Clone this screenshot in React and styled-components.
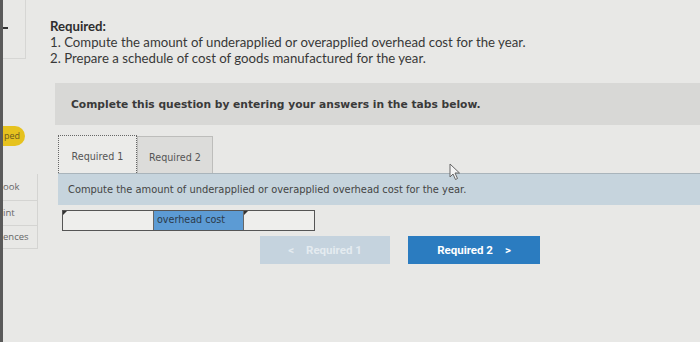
import React from 'react';
import styled, { createGlobalStyle } from 'styled-components';

const GlobalStyle = createGlobalStyle`
  html, body {
    margin: 0;
    padding: 0;
    background: #e8e8e6;
    width: 700px;
    height: 342px;
    overflow: hidden;
  }
`;

const Page = styled.div`
  display: flex;
  width: 700px;
  height: 342px;
  background: #e8e8e6;
`;

const Sidebar = styled.div`
  width: 42px;
  flex-shrink: 0;
  border-left: 3px solid #5a5a5a;
  display: flex;
  flex-direction: column;
  font-family: 'Open Sans', sans-serif;
  font-size: 9.5px;
  color: #666;
`;

const TopBox = styled.div`
  width: 22px;
  height: 58px;
  border-right: 1px solid #d6d6d4;
  border-bottom: 1px solid #d6d6d4;
  position: relative;
`;

const Dash = styled.div`
  position: absolute;
  left: 0;
  top: 27px;
  width: 5px;
  height: 2px;
  background: #333;
`;

const Pill = styled.div`
  margin-top: 67px;
  width: 22px;
  height: 20px;
  border-radius: 0 10px 10px 0;
  background: #e6c21e;
  color: #6a5a20;
  font-size: 9px;
  line-height: 20px;
  padding-left: 1px;
  box-sizing: border-box;
`;

const Chevron = styled.div`
  height: 28px;
`;

const SideItem = styled.div`
  width: 34px;
  height: ${(p) => p.$h || 24}px;
  border-right: 1px solid #d4d4d2;
  border-bottom: 1px solid #d4d4d2;
  line-height: ${(p) => p.$h || 24}px;
  white-space: nowrap;
`;

const Main = styled.div`
  flex: 1;
  padding: 18px 0 0 5px;
  position: relative;
`;

const Heading = styled.div`
  font-family: Lato, sans-serif;
  font-size: 13.2px;
  line-height: 16px;
  color: #383838;
`;

const HeadTitle = styled.div`
  font-weight: 700;
  color: #2e2e2e;
`;

const Banner = styled.div`
  margin: 17px 0 0 5px;
  height: 42px;
  background: #d8d8d6;
  display: flex;
  align-items: center;
  padding-left: 16px;
  font-family: 'DejaVu Sans', Verdana, sans-serif;
  font-weight: 700;
  font-size: 10.7px;
  color: #3a3a3a;
`;

const Panel = styled.div`
  margin: 10px 0 0 8px;
`;

const Tabs = styled.div`
  display: flex;
  height: 38px;
`;

const Tab = styled.div`
  width: ${(p) => p.$w}px;
  box-sizing: border-box;
  display: flex;
  align-items: center;
  justify-content: center;
  padding-top: 4px;
  font-family: 'DejaVu Sans', Verdana, sans-serif;
  font-size: 9.6px;
  color: #555;
  background: ${(p) => (p.$active ? '#ebebe9' : '#dcdcda')};
  border: ${(p) => (p.$active ? '1px dotted #666' : '1px solid #bdbdbb')};
  border-bottom: none;
  margin-top: ${(p) => (p.$active ? 0 : 1)}px;
`;

const Instruction = styled.div`
  height: 31px;
  border-top: 1px solid #a9b4bb;
  background: #c6d4dd;
  display: flex;
  align-items: center;
  padding-left: 10px;
  font-family: 'DejaVu Sans', Verdana, sans-serif;
  font-size: 9.9px;
  color: #444;
`;

const InputRow = styled.div`
  margin: 5px 0 0 4px;
  display: flex;
  width: 253px;
  height: 21px;
  box-sizing: border-box;
  border: 1px solid #555;
  background: #eeeeec;
`;

const Cell = styled.div`
  width: ${(p) => p.$w}px;
  position: relative;
  background: ${(p) => (p.$label ? '#5c9bd4' : '#eeeeec')};
  border-right: ${(p) => (p.$last ? 'none' : '1px solid #666')};
  font-family: 'DejaVu Sans', Verdana, sans-serif;
  font-size: 9.6px;
  color: #2b3a4a;
  line-height: 18px;
  padding-left: 3px;
  box-sizing: border-box;
`;

const Marker = styled.span`
  position: absolute;
  left: 0;
  top: 0;
  width: 0;
  height: 0;
  border-top: 4px solid #333;
  border-right: 4px solid transparent;
`;

const Buttons = styled.div`
  display: flex;
  gap: 18px;
  margin: 5px 0 0 202px;
`;

const NavButton = styled.div`
  width: ${(p) => p.$w}px;
  height: 28px;
  display: flex;
  align-items: center;
  justify-content: center;
  gap: 12px;
  background: ${(p) => (p.$disabled ? '#c5d3de' : '#2b7cc0')};
  color: ${(p) => (p.$disabled ? '#e4ebf0' : '#fff')};
  font-family: Roboto, sans-serif;
  font-weight: 700;
  font-size: 11.5px;
`;

const Cursor = styled.svg`
  position: absolute;
  left: 404px;
  top: 163px;
`;

export default function App() {
  return (
    <>
      <GlobalStyle />
      <Page>
        <Sidebar>
          <TopBox>
            <Dash />
          </TopBox>
          <Pill>ped</Pill>
          <Chevron />
          <SideItem $h={26}>ook</SideItem>
          <SideItem $h={24}>int</SideItem>
          <SideItem $h={22}>ences</SideItem>
        </Sidebar>
        <Main>
          <Heading>
            <HeadTitle>Required:</HeadTitle>
            <div>1. Compute the amount of underapplied or overapplied overhead cost for the year.</div>
            <div>2. Prepare a schedule of cost of goods manufactured for the year.</div>
          </Heading>
          <Banner>Complete this question by entering your answers in the tabs below.</Banner>
          <Panel>
            <Tabs>
              <Tab $w={79} $active>Required 1</Tab>
              <Tab $w={76}>Required 2</Tab>
            </Tabs>
            <Instruction>
              Compute the amount of underapplied or overapplied overhead cost for the year.
            </Instruction>
            <InputRow>
              <Cell $w={91}>
                <Marker />
              </Cell>
              <Cell $w={90} $label>overhead cost</Cell>
              <Cell $w={70} $last>
                <Marker />
              </Cell>
            </InputRow>
            <Buttons>
              <NavButton $w={130} $disabled>
                <span>&lt;</span>
                <span>Required 1</span>
              </NavButton>
              <NavButton $w={132}>
                <span>Required 2</span>
                <span>&gt;</span>
              </NavButton>
            </Buttons>
          </Panel>
          <Cursor width="12" height="18" viewBox="0 0 12 18">
            <path d="M1 1 L1 14 L4 11 L6.5 16.5 L8.5 15.5 L6 10 L10.5 10 Z" fill="#f4f4f4" stroke="#666" strokeWidth="1" />
          </Cursor>
        </Main>
      </Page>
    </>
  );
}
